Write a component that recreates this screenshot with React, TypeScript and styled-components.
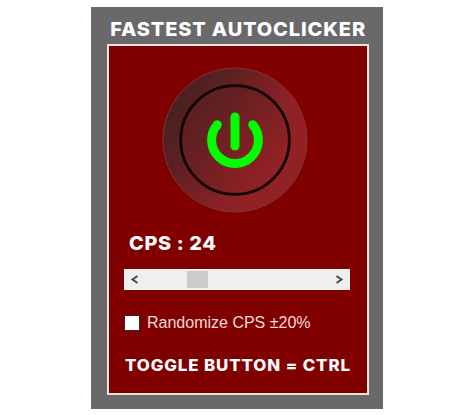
import React, { Component } from "react";
import styled, { createGlobalStyle } from "styled-components";

const GlobalStyle = createGlobalStyle`
  body {
    margin: 0;
    background: #fff;
  }
`;
const Page = styled.div`
  box-sizing: border-box;
  width: 474px;
  height: 415px;
  padding: 7px 0 0 91px;
  overflow: hidden;
`;
const Frame = styled.div`
  box-sizing: border-box;
  width: 292px;
  height: 402px;
  padding: 0 14px 14px 16px;
  background: #696969;
  display: flex;
  flex-direction: column;
`;
const Heading = styled.div<{ size: number; spacing: number; stretch: number }>`
  font-family: Inter, "Open Sans", sans-serif;
  font-weight: 800;
  font-size: ${p => p.size}px;
  letter-spacing: ${p => p.spacing}px;
  line-height: 24px;
  color: #fff;
  white-space: pre;
  transform: scaleX(${p => p.stretch});
  transform-origin: left;
`;
const Title = styled(Heading)`
  height: 37px;
  padding: 11px 0 0 3px;
  box-sizing: border-box;
`;
const Panel = styled.div`
  box-sizing: border-box;
  height: 351px;
  padding: 21px 16px 0;
  border: 2px solid #f3e4e2;
  background: #800000;
  display: flex;
  flex-direction: column;
`;
const PowerButton = styled.button`
  width: 146px;
  height: 146px;
  margin-left: 37px;
  padding: 0;
  border: 0;
  background: none;
  svg {
    display: block;
  }
`;
const Speed = styled(Heading)`
  margin: 19px 0 0 4px;
`;
const ScrollBar = styled.div`
  box-sizing: border-box;
  width: 226px;
  height: 21px;
  margin: 13px 0 0 -1px;
  border: 1px solid #fbf5f4;
  background: #efefef;
  display: flex;
  align-items: center;
`;
const Arrow = styled.svg`
  flex: none;
  width: 18px;
  height: 19px;
`;
const Track = styled.div`
  flex: 1;
  height: 17px;
`;
const Thumb = styled.div`
  width: 21px;
  height: 17px;
  margin-left: 44px;
  background: #cbcbcb;
`;
const Option = styled.label`
  height: 20px;
  margin-top: 23px;
  display: flex;
  align-items: center;
  font: 16px/20px "Liberation Sans", sans-serif;
  color: #f4d9d9;
  white-space: nowrap;
`;
const Box = styled.span`
  box-sizing: border-box;
  width: 16px;
  height: 16px;
  margin: 0 7px 0 -1px;
  border: 1px solid #432020;
  background: #fff;
`;
const Hotkey = styled(Heading)`
  margin-top: 21px;
`;

const PowerIcon = () => (
  <svg width="146" height="146" viewBox="0 0 146 146">
    <defs>
      <linearGradient id="disc" x1="0.12" y1="0.2" x2="0.82" y2="0.62">
        <stop offset="0" stopColor="#4b2021" />
        <stop offset="0.2" stopColor="#582122" />
        <stop offset="0.48" stopColor="#712023" />
        <stop offset="0.8" stopColor="#8c2226" />
        <stop offset="1" stopColor="#922125" />
      </linearGradient>
      <linearGradient id="inner" x1="0.12" y1="0.16" x2="0.88" y2="0.72">
        <stop offset="0" stopColor="#592021" />
        <stop offset="0.3" stopColor="#662022" />
        <stop offset="0.65" stopColor="#7d2023" />
        <stop offset="1" stopColor="#922125" />
      </linearGradient>
    </defs>
    <circle cx="73" cy="73" r="72" fill="url(#disc)" stroke="#833235" />
    <circle cx="73" cy="73" r="54.3" fill="url(#inner)" stroke="#120507" strokeWidth="2.8" />
    <g fill="none" stroke="#00ff00" strokeWidth="9" strokeLinecap="round">
      <path d="M55.3 57.7A23.4 23.4 0 1 0 90.7 57.7" />
      <path d="M73 50V79" />
    </g>
  </svg>
);

class AutoClicker extends Component<any, any> {
  public state = {
    cps: 24
  };

  render() {
    const { cps } = this.state;
    return (
      <Frame>
        <Title size={19} spacing={0.8} stretch={1.053}>
          FASTEST AUTOCLICKER
        </Title>
        <Panel>
          <PowerButton aria-label="Power">
            <PowerIcon />
          </PowerButton>
          <Speed size={19} spacing={0.6} stretch={1.045}>
            CPS : {cps}
          </Speed>
          <ScrollBar>
            <Arrow viewBox="0 0 18 19">
              <path d="M12.5 6L7.5 9.5L12.5 13" fill="none" stroke="#484848" strokeWidth="2" />
            </Arrow>
            <Track>
              <Thumb />
            </Track>
            <Arrow viewBox="0 0 18 19">
              <path d="M5.5 6L10.5 9.5L5.5 13" fill="none" stroke="#484848" strokeWidth="2" />
            </Arrow>
          </ScrollBar>
          <Option>
            <Box />
            Randomize CPS ±20%
          </Option>
          <Hotkey size={15.5} spacing={0.8} stretch={1.09}>
            TOGGLE BUTTON = CTRL
          </Hotkey>
        </Panel>
      </Frame>
    );
  }
}

const App = () => (
  <Page>
    <GlobalStyle />
    <AutoClicker />
  </Page>
);

export default App;
